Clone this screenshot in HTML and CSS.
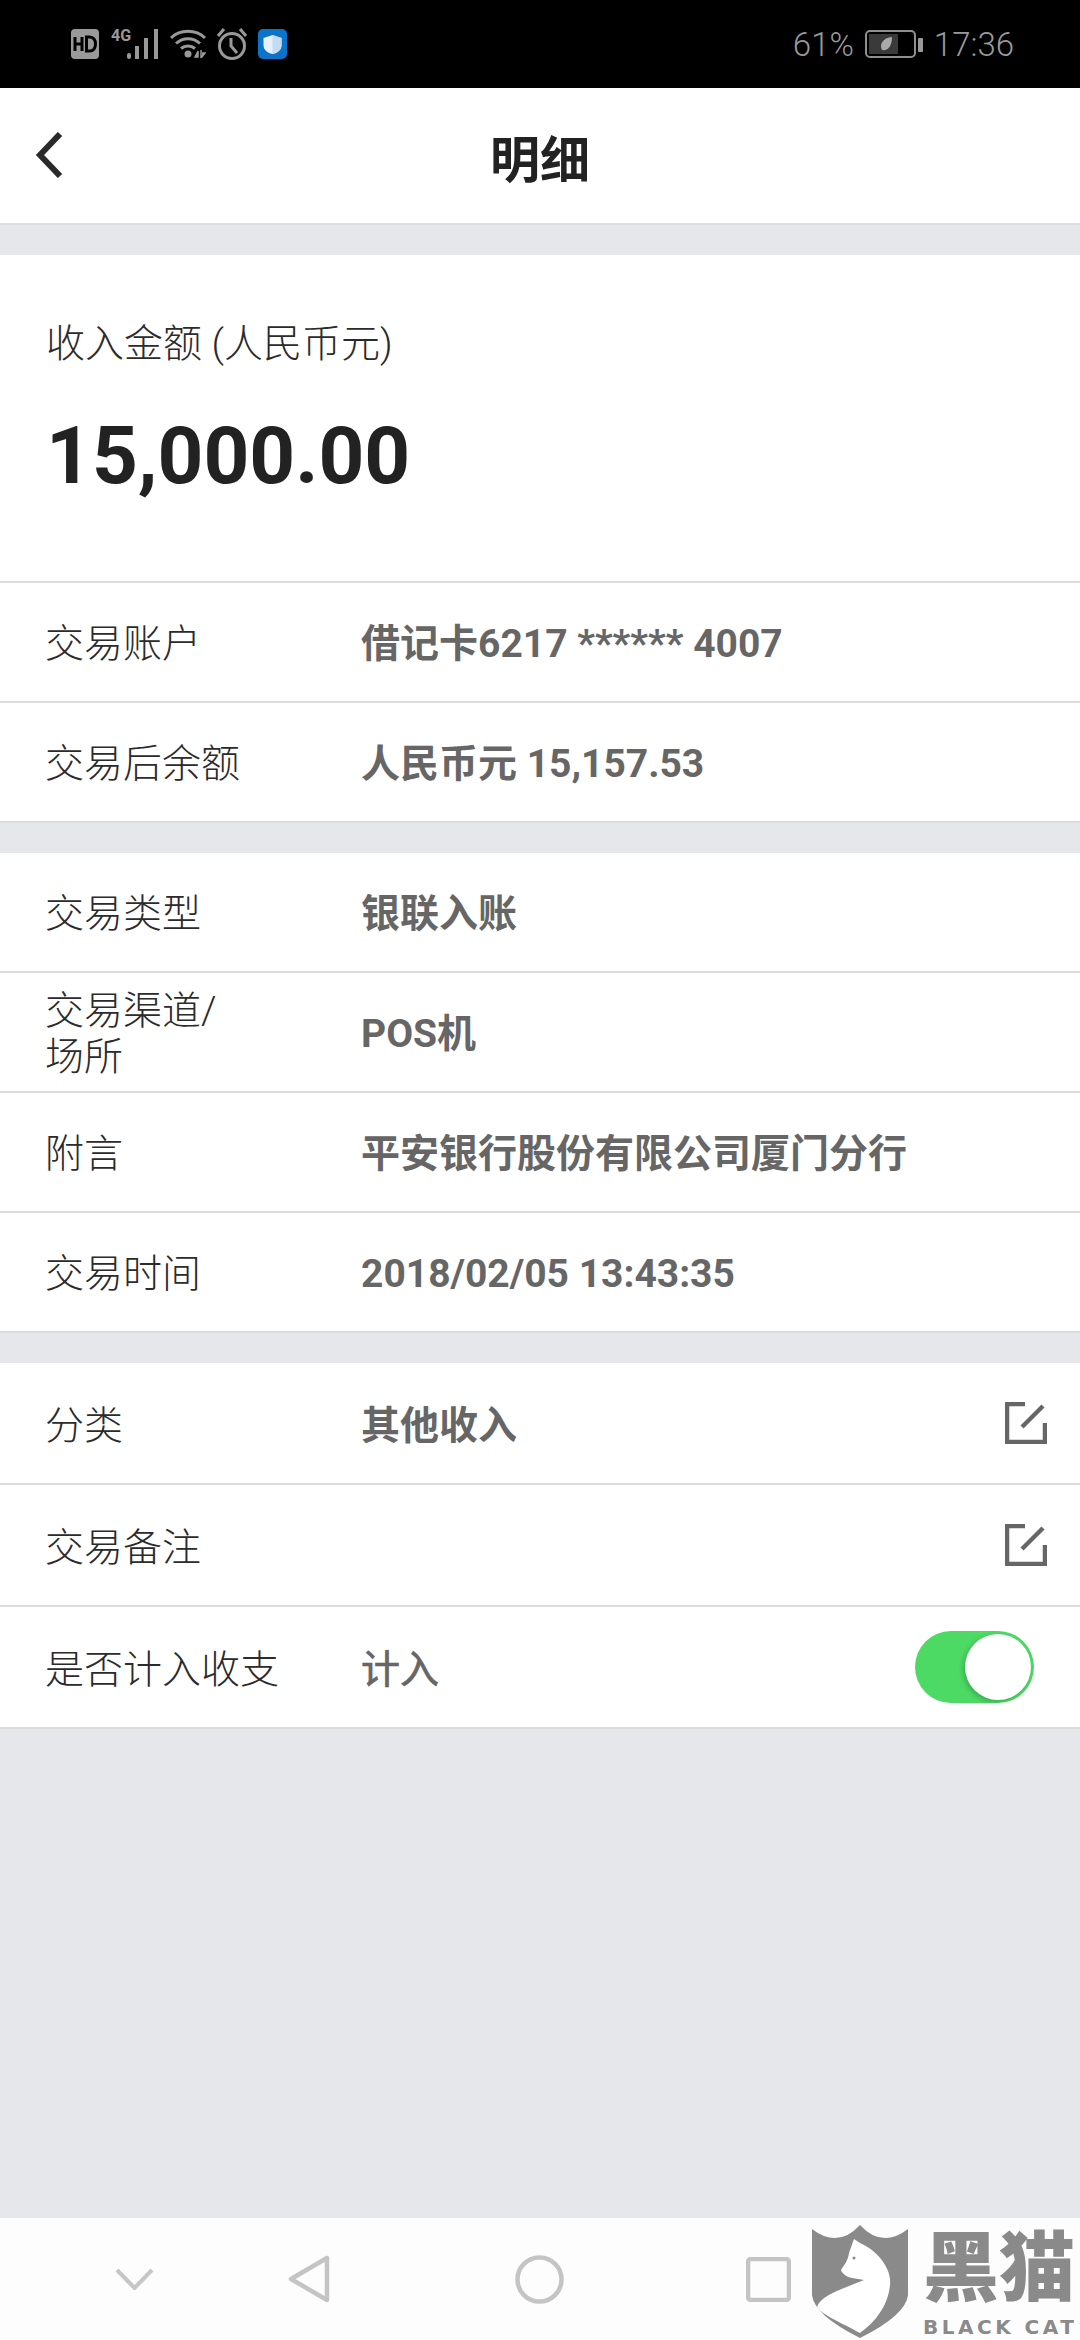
FILE: index.html
```html
<!DOCTYPE html>
<html lang="zh-CN">
<head>
    <meta charset="UTF-8">
    <meta name="viewport" content="width=device-width, initial-scale=1.0">
    <title>明细</title>
    <link rel="stylesheet" href="styles.css">
</head>
<body>
    <div class="status-bar">
        <div class="status-left">
            <svg class="ic-hd" width="28" height="30" viewBox="0 0 28 30">
                <rect width="28" height="30" rx="4" fill="#999"/>
                <path d="M4 8v14M11 8v14M4 15h7" stroke="#000" stroke-width="3" fill="none"/>
                <path d="M15.500 8v14h3c4 0 6-3 6-7s-2-7-6-7z" stroke="#000" stroke-width="3" fill="none"/>
            </svg>
            <div class="signal">
                <span class="net">4G</span>
                <svg width="32" height="30" viewBox="0 0 32 30">
                    <rect x="0" y="24" width="4" height="6" rx="2" fill="#999"/>
                    <rect x="8" y="17" width="4" height="13" fill="#999"/>
                    <rect x="17" y="9" width="4" height="21" fill="#999"/>
                    <rect x="27" y="0" width="4" height="30" fill="#999"/>
                </svg>
            </div>
            <svg width="36" height="30" viewBox="0 0 36 30">
                <path d="M1 9C10 0 26 0 35 9" stroke="#999" stroke-width="3" fill="none"/>
                <path d="M6 14.500C13 8 23 8 30 14.500" stroke="#999" stroke-width="3" fill="none"/>
                <path d="M11 19.500C15 16 21 16 25 19.500" stroke="#999" stroke-width="3" fill="none"/>
                <circle cx="18" cy="25" r="3.500" fill="#999"/>
                <path d="M25 28l3-6v6zM31 21v8M31 29l4-5h-3" stroke="#999" stroke-width="1.500" fill="#999"/>
            </svg>
            <svg width="30" height="32" viewBox="0 0 30 32">
                <circle cx="15" cy="18" r="12.500" stroke="#999" stroke-width="3" fill="none"/>
                <path d="M14 10v8l6 7" stroke="#999" stroke-width="3" fill="none"/>
                <path d="M1 8L7 1M29 8L23 1" stroke="#999" stroke-width="3" fill="none"/>
            </svg>
            <svg width="29" height="30" viewBox="0 0 29 30">
                <rect width="29" height="30" rx="5" fill="#0b74c8"/>
                <path d="M14.500 6l9 3v7c0 5-4 8-9 9-5-1-9-4-9-9V9z" fill="#e6f1fb"/>
                <path d="M14.500 6l9 3v7c0 5-4 8-9 9z" fill="#c3dcf4"/>
            </svg>
        </div>
        <div class="status-right">
            <span>61%</span>
            <svg width="58" height="28" viewBox="0 0 58 28">
                <rect x="1" y="1" width="49" height="26" rx="4" stroke="#8f8f8f" stroke-width="2" fill="none"/>
                <rect x="4" y="4" width="29" height="20" fill="#3a3a3a"/>
                <path d="M17 20c-3-6 1-12 10-13 0 9-4 14-10 13z" fill="#aaa"/>
                <rect x="53" y="8" width="5" height="14" rx="1" fill="#999"/>
            </svg>
            <span>17:36</span>
        </div>
    </div>

    <header class="top-bar">
        <svg class="back" width="28" height="46" viewBox="0 0 28 46">
            <path d="M25 2L5 23l20 21" stroke="#2a2a2a" stroke-width="6" fill="none"/>
        </svg>
        <h1>明细</h1>
    </header>

    <section class="group first">
        <div class="amount-card">
            <div class="amount-label">收入金额 (人民币元)</div>
            <div class="amount">15,000.00</div>
        </div>
        <div class="row"><div class="label">交易账户</div><div class="value">借记卡6217 ****** 4007</div></div>
        <div class="row"><div class="label">交易后余额</div><div class="value">人民币元 15,157.53</div></div>
    </section>

    <section class="group">
        <div class="row"><div class="label">交易类型</div><div class="value">银联入账</div></div>
        <div class="row"><div class="label two-line">交易渠道/<br>场所</div><div class="value">POS机</div></div>
        <div class="row"><div class="label">附言</div><div class="value">平安银行股份有限公司厦门分行</div></div>
        <div class="row"><div class="label">交易时间</div><div class="value">2018/02/05 13:43:35</div></div>
    </section>

    <section class="group">
        <div class="row tall">
            <div class="label">分类</div><div class="value">其他收入</div>
            <svg class="edit" width="42" height="42" viewBox="0 0 42 42">
                <path d="M20 2H2v38h38V21" stroke="#666" stroke-width="4.500" fill="none"/>
                <path d="M17 25L38 4" stroke="#666" stroke-width="4.500" fill="none"/>
            </svg>
        </div>
        <div class="row tall">
            <div class="label">交易备注</div><div class="value"></div>
            <svg class="edit" width="42" height="42" viewBox="0 0 42 42">
                <path d="M20 2H2v38h38V21" stroke="#666" stroke-width="4.500" fill="none"/>
                <path d="M17 25L38 4" stroke="#666" stroke-width="4.500" fill="none"/>
            </svg>
        </div>
        <div class="row tall">
            <div class="label">是否计入收支</div><div class="value plain">计入</div>
            <div class="toggle"><div class="knob"></div></div>
        </div>
    </section>

    <div class="filler"></div>

    <nav class="nav-bar">
        <svg class="nav-down" width="39" height="22" viewBox="0 0 39 22">
            <path d="M2 2l17.500 18L37 2" stroke="#c6c6c6" stroke-width="4" fill="none"/>
        </svg>
        <svg class="nav-back" width="42" height="48" viewBox="0 0 42 48">
            <path d="M39 3v42L3 24z" stroke="#c4c4c4" stroke-width="4.500" stroke-linejoin="round" fill="none"/>
        </svg>
        <svg class="nav-home" width="49" height="49" viewBox="0 0 49 49">
            <circle cx="24.500" cy="24.500" r="22" stroke="#c4c4c4" stroke-width="4.500" fill="none"/>
        </svg>
        <svg class="nav-recent" width="45" height="45" viewBox="0 0 45 45">
            <rect x="2" y="2" width="41" height="41" rx="3" stroke="#c4c4c4" stroke-width="4.500" fill="none"/>
        </svg>

        <div class="watermark">
            <svg width="96" height="113" viewBox="0 0 96 113">
                <path d="M0 4Q26 24 48 0Q70 24 96 4V70Q94 90 48 113Q2 90 0 70z" fill="#8a8a8a"/>
                <path d="M42 14l6 4C66 26 80 44 78 60C76 82 62 98 48 108C30 98 10 90 5 82C8 72 24 66 52 55L40 53C34 52 30 48 29 45C32 40 36 36 37 28z" fill="#fff"/>
                <circle cx="42" cy="33" r="1.500" fill="#8a8a8a"/>
            </svg>
            <div class="wm-text">
                <div class="wm-cn">黑猫</div>
                <div class="wm-en">BLACK CAT</div>
            </div>
        </div>
    </nav>
</body>
</html>
```

FILE: styles.css
```css
* {
    box-sizing: border-box;
}

html, body {
    margin: 0;
    padding: 0;
}

body {
    width: 1080px;
    height: 2340px;
    display: flex;
    flex-direction: column;
    background-color: #e6e7eb;
    font-family: Roboto, "Noto Sans CJK SC", sans-serif;
    overflow: hidden;
}

.status-bar {
    height: 88px;
    flex-shrink: 0;
    background-color: #000;
    display: flex;
    justify-content: space-between;
    align-items: center;
    padding: 0 66px 0 71px;
    color: #999;
    font-weight: 300;
    font-size: 33px;
}

.status-left, .status-right {
    display: flex;
    align-items: center;
}

.status-left {
    gap: 11px;
    padding-bottom: 1px;
}

.status-right {
    gap: 11px;
}

.signal {
    position: relative;
    width: 48px;
    height: 30px;
    margin-left: 1px;
    display: flex;
    justify-content: flex-end;
}

.net {
    position: absolute;
    left: 0;
    top: -2px;
    font-size: 16px;
    font-weight: 700;
    line-height: 18px;
    color: #999;
}

.top-bar {
    height: 137px;
    flex-shrink: 0;
    position: relative;
    display: flex;
    align-items: center;
    justify-content: center;
    background-color: #fff;
    border-bottom: 2px solid #dcdde0;
}

.back {
    position: absolute;
    left: 35px;
    top: 44px;
}

.top-bar h1 {
    margin: 0;
    font-size: 50px;
    font-weight: 700;
    color: #222;
}

.group {
    margin-top: 30px;
    background-color: #fff;
}

.amount-card {
    height: 328px;
    padding: 60px 46px 0;
    border-bottom: 2px solid #dcdcdc;
}

.amount-label {
    font-size: 39px;
    font-weight: 300;
    line-height: 58px;
    color: #2b2b2b;
}

.amount {
    margin-top: 33px;
    font-size: 80px;
    line-height: 100px;
    font-weight: 700;
    color: #222;
}

.row {
    height: 120px;
    display: flex;
    align-items: center;
    padding: 3px 33px 0 45px;
    border-bottom: 2px solid #dcdcdc;
}

.row.tall {
    height: 122px;
    padding-top: 0;
}

.row.tall .label, .row.tall .value {
    padding-top: 6px;
}

.label {
    width: 316px;
    flex-shrink: 0;
    font-size: 39px;
    line-height: 56px;
    font-weight: 300;
    color: #2b2b2b;
}

.label.two-line {
    line-height: 46px;
}

.value {
    flex: 1;
    font-size: 39px;
    line-height: 56px;
    font-weight: 700;
    color: #666;
}

.value.plain {
    font-weight: 400;
    -webkit-text-stroke: 0.7px #666;
}

.edit {
    flex-shrink: 0;
}

.toggle {
    width: 119px;
    height: 72px;
    flex-shrink: 0;
    margin-right: 13px;
    border-radius: 36px;
    background-color: #4cd964;
    display: flex;
    justify-content: flex-end;
    align-items: center;
    padding-right: 3px;
}

.knob {
    width: 66px;
    height: 66px;
    border-radius: 50%;
    background-color: #fff;
    box-shadow: -2px 2px 5px rgba(0, 0, 0, 0.2);
}

.filler {
    flex: 1;
}

.nav-bar {
    height: 122px;
    flex-shrink: 0;
    position: relative;
    display: flex;
    align-items: center;
    padding-left: 115px;
    background-color: #fdfdfd;
}

.nav-back {
    margin-left: 134px;
}

.nav-home {
    margin-left: 185px;
}

.nav-recent {
    margin-left: 182px;
}

.watermark {
    position: absolute;
    left: 812px;
    top: 7px;
    display: flex;
    gap: 15px;
}

.wm-text {
    padding-top: 6px;
    color: #8a8a8a;
    font-weight: 900;
}

.wm-cn {
    font-size: 76px;
    line-height: 76px;
}

.wm-en {
    margin-top: 9px;
    font-family: "DejaVu Sans", sans-serif;
    font-weight: 700;
    font-size: 20px;
    line-height: 22px;
    letter-spacing: 3.500px;
    white-space: nowrap;
}
```
